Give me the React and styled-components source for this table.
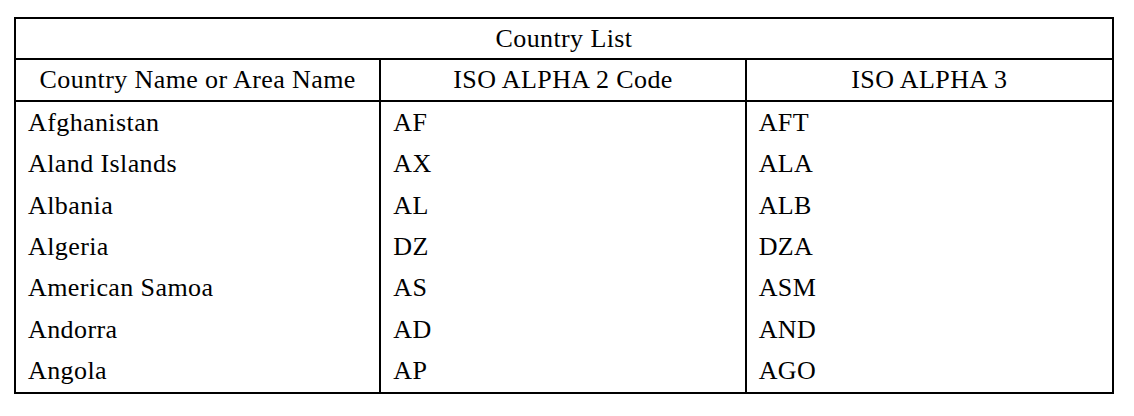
import React from 'react';
import styled, { createGlobalStyle } from 'styled-components';

const GlobalStyle = createGlobalStyle`
  html, body {
    margin: 0;
    padding: 0;
    background: #fff;
  }
  body {
    font-family: "Liberation Serif", "Times New Roman", serif;
    color: #000;
  }
`;

const Page = styled.div`
  padding: 17px 0 0 14px;
`;

const Table = styled.div`
  width: 1100px;
  box-sizing: border-box;
  border: 2px solid #000;
`;

const TitleRow = styled.div`
  height: 39px;
  border-bottom: 2px solid #000;
  display: flex;
  align-items: center;
  justify-content: center;
  font-size: 26px;
  letter-spacing: 0.4px;
`;

const Row = styled.div`
  display: grid;
  grid-template-columns: 1fr 1fr 1fr;
  height: ${(p) => p.$height}px;
  border-bottom: ${(p) => (p.$head ? '2px solid #000' : 'none')};
`;

const Cell = styled.div`
  box-sizing: border-box;
  display: flex;
  align-items: center;
  justify-content: ${(p) => (p.$head ? 'center' : 'flex-start')};
  padding: 0 12px;
  font-size: 26px;
  letter-spacing: 0.4px;
  white-space: nowrap;
  border-right: 2px solid #000;

  &:last-child {
    border-right: none;
  }
`;

const countries = [
  ['Afghanistan', 'AF', 'AFT'],
  ['Aland Islands', 'AX', 'ALA'],
  ['Albania', 'AL', 'ALB'],
  ['Algeria', 'DZ', 'DZA'],
  ['American Samoa', 'AS', 'ASM'],
  ['Andorra', 'AD', 'AND'],
  ['Angola', 'AP', 'AGO'],
];

const App = () => {
  return (
    <Page>
      <GlobalStyle />
      <Table>
        <TitleRow>Country List</TitleRow>
        <Row $head $height={40}>
          <Cell $head>Country Name or Area Name</Cell>
          <Cell $head>ISO ALPHA 2 Code</Cell>
          <Cell $head>ISO ALPHA 3</Cell>
        </Row>
        {countries.map(([name, alpha2, alpha3]) => (
          <Row key={name} $height={41.43}>
            <Cell>{name}</Cell>
            <Cell>{alpha2}</Cell>
            <Cell>{alpha3}</Cell>
          </Row>
        ))}
      </Table>
    </Page>
  );
};

export default App;
